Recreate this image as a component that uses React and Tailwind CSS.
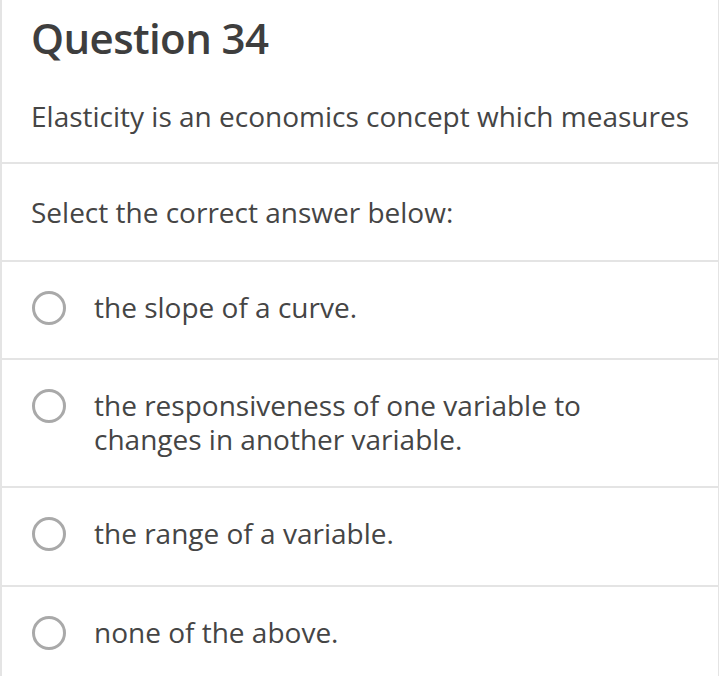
import React from "react";

const font = { fontFamily: '"Open Sans", "Noto Sans", sans-serif' };

function Radio() {
  return (
    <span className="block w-[34px] h-[34px] rounded-full border-[3px] border-[#a9a9a9] bg-white shrink-0" />
  );
}

function Option({ lines, h }) {
  return (
    <div className={`flex items-start border-t-2 border-[#e4e4e4] pl-[30px] pr-4 ${h}`}>
      <div className="flex items-start gap-[28px] pt-[29px]">
        <Radio />
        <div className="text-[28px] leading-[34px] text-[#454545] -mt-[1px]">
          {lines.map((l, i) => (
            <div key={i}>{l}</div>
          ))}
        </div>
      </div>
    </div>
  );
}

export default function App() {
  return (
    <div className="w-[719px] h-[676px] overflow-hidden bg-white border-l-2 border-r border-[#e4e4e4]" style={font}>
      <div className="h-[162px] pl-[29px]">
        <div className="pt-[12px] text-[42px] leading-[52px] font-semibold text-[#3e3e3e] tracking-[-0.6px]">
          Question 34
        </div>
        <div className="pt-[35px] text-[28px] leading-[34px] text-[#454545]">
          Elasticity is an economics concept which measures
        </div>
      </div>
      <div className="h-[98px] border-t-2 border-[#e4e4e4] pl-[29px] flex items-center">
        <div className="text-[28px] leading-[34px] text-[#454545]">Select the correct answer below:</div>
      </div>
      <Option lines={["the slope of a curve."]} h="h-[98px]" />
      <Option lines={["the responsiveness of one variable to", "changes in another variable."]} h="h-[128px]" />
      <Option lines={["the range of a variable."]} h="h-[99px]" />
      <Option lines={["none of the above."]} h="h-[100px]" />
    </div>
  );
}
